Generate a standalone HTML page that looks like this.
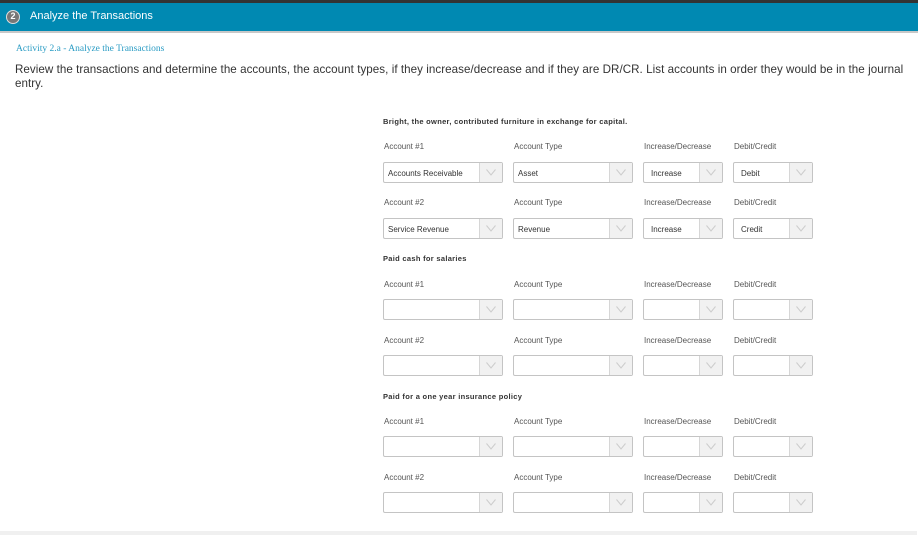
<!DOCTYPE html>
<html><head><meta charset="utf-8"><style>
*{margin:0;padding:0;box-sizing:border-box}
body{width:918px;height:535px;background:#fff;font-family:"Liberation Sans",sans-serif;position:relative;overflow:hidden;color:#333}
.top{position:absolute;left:0;top:0;width:918px;height:3px;background:#333}
.bar{position:absolute;left:0;top:3px;width:918px;height:28px;background:#0089b2;color:#fff;font-size:11px}
.bar .num{position:absolute;left:6px;top:7px;width:14px;height:14px;border-radius:50%;background:#777;border:1.5px solid #ddd;font-size:9px;font-weight:bold;text-align:center;line-height:11px;color:#fff}
.bar .t{position:absolute;left:30px;top:7px}
.line{position:absolute;left:0;top:31px;width:918px;height:2px;background:#c8c8c8}
.act{position:absolute;left:16px;top:44px;font-family:"Liberation Serif",serif;font-size:9.5px;color:#2a9cc4}
.desc{position:absolute;left:15px;top:63px;font-size:11.6px;line-height:14px;color:#333;letter-spacing:0.05px}
.h{position:absolute;left:383px;font-size:7.5px;font-weight:bold;color:#333;letter-spacing:0.3px}
.l{position:absolute;font-size:8px;color:#555}
.s{position:absolute;height:21px;border:1px solid #c4c4c4;border-radius:2px;background:#fff;font-size:8px;color:#333;padding:6px 0 0 4px}
.s::after{content:"";position:absolute;right:0;top:0;width:22px;height:19px;background:#f1f1f1;border-left:1px solid #d6d6d6}
.s svg{position:absolute;right:6px;top:6px;z-index:1}
.bot{position:absolute;left:0;top:531px;width:917px;height:4px;background:#f0f0f0}
</style></head><body>
<div class="top"></div>
<div class="bar"><div class="num">2</div><div class="t">Analyze the Transactions</div></div>
<div class="line"></div>
<div class="act">Activity 2.a - Analyze the Transactions</div>
<div class="desc">Review the transactions and determine the accounts, the account types, if they increase/decrease and if they are DR/CR. List accounts in order they would be in the journal<br>entry.</div>

<div class="h" style="top:117px">Bright, the owner, contributed furniture in exchange for capital.</div>
<div class="h" style="top:254px">Paid cash for salaries</div>
<div class="h" style="top:392px">Paid for a one year insurance policy</div>

<div id="rows"></div>
<div class="bot"></div>
<script>
var rows=[[142,162,'Account #1',['Accounts Receivable','Asset','Increase','Debit']],
[198,218,'Account #2',['Service Revenue','Revenue','Increase','Credit']],
[280,299,'Account #1',['','','','']],
[336,355,'Account #2',['','','','']],
[417,436,'Account #1',['','','','']],
[473,492,'Account #2',['','','','']]];
var cols=[[383,120],[513,120],[643,80],[733,80]];
var h='';
rows.forEach(function(r){
 var labs=[r[2],'Account Type','Increase/Decrease','Debit/Credit'];
 cols.forEach(function(c,i){
  h+='<div class="l" style="left:'+(c[0]+1)+'px;top:'+r[0]+'px">'+labs[i]+'</div>';
  var pad=(i>=2&&r[3][i])?'padding-left:7px;':'';
  h+='<div class="s" style="left:'+c[0]+'px;top:'+r[1]+'px;width:'+c[1]+'px;'+pad+'">'+r[3][i]+'<svg width="10" height="7" viewBox="0 0 10 7"><path d="M0.5 0.5L5 6L9.5 0.5" fill="none" stroke="#ccc" stroke-width="1"/></svg></div>';
 });
});
document.getElementById('rows').innerHTML=h;
</script>
</body></html>
